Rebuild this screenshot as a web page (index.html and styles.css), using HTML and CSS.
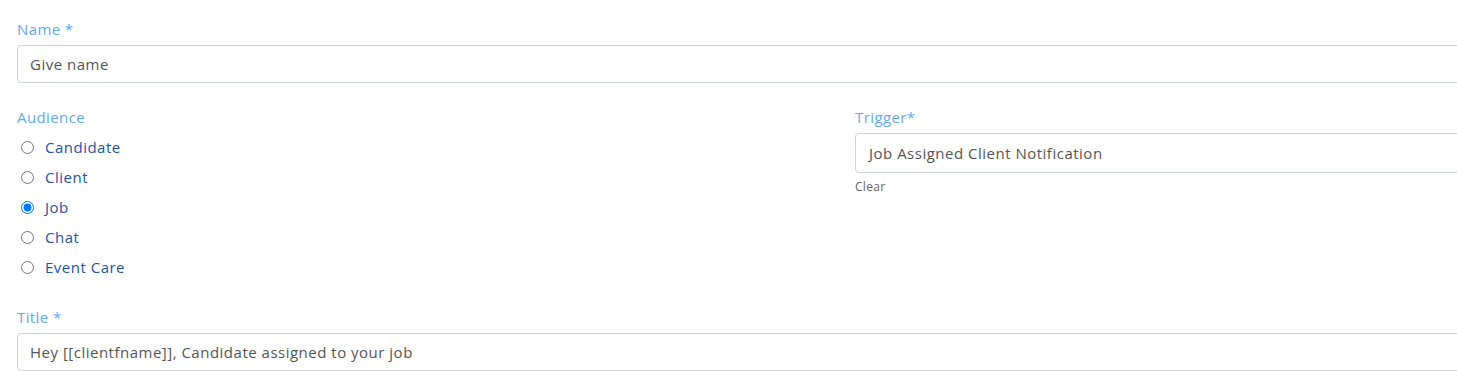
FILE: index.html
```html
<!DOCTYPE html>
<html lang="en">
<head>
    <meta charset="UTF-8">
    <meta name="viewport" content="width=device-width, initial-scale=1.0">
    <title>Notification Template</title>
    <link rel="stylesheet" href="styles.css">
</head>
<body>
    <form class="template-form">
        <div class="form-group">
            <label class="field-label" for="name">Name *</label>
            <input type="text" id="name" class="form-control" value="Give name">
        </div>

        <div class="form-row">
            <div class="form-col">
                <span class="field-label">Audience</span>
                <div class="radio-list">
                    <label class="radio-item"><input type="radio" name="audience"> <span>Candidate</span></label>
                    <label class="radio-item"><input type="radio" name="audience"> <span>Client</span></label>
                    <label class="radio-item"><input type="radio" name="audience" checked> <span>Job</span></label>
                    <label class="radio-item"><input type="radio" name="audience"> <span>Chat</span></label>
                    <label class="radio-item"><input type="radio" name="audience"> <span>Event Care</span></label>
                </div>
            </div>
            <div class="form-col">
                <label class="field-label" for="trigger">Trigger*</label>
                <div class="form-control select-control" id="trigger">Job Assigned Client Notification</div>
                <a href="#" class="clear-link">Clear</a>
            </div>
        </div>

        <div class="form-group">
            <label class="field-label" for="title">Title *</label>
            <input type="text" id="title" class="form-control" value="Hey [[clientfname]], Candidate assigned to your job">
        </div>
    </form>
</body>
</html>
```

FILE: styles.css
```css
body {
    margin: 0;
    padding: 0;
    background: #fff;
    font-family: "Open Sans", Arial, sans-serif;
    overflow: hidden;
}

.template-form {
    width: 1646px;
    padding: 18px 0 0 17px;
}

.field-label {
    display: block;
    color: #62a9f4;
    font-size: 15px;
    letter-spacing: 0.4px;
    line-height: 22px;
    margin-bottom: 5px;
}

.form-control {
    display: block;
    box-sizing: border-box;
    width: 100%;
    height: 38px;
    padding: 0 12px;
    border: 1px solid #ced4da;
    border-radius: 4px;
    font-family: inherit;
    font-size: 15px;
    letter-spacing: 0.5px;
    color: #555;
    background: #fff;
}

.form-row {
    display: flex;
    gap: 30px;
    margin-top: 23px;
}

.form-col {
    flex: 1;
}

.radio-list {
    margin-top: -1px;
}

.radio-item {
    display: flex;
    align-items: center;
    height: 30px;
    font-size: 15px;
    letter-spacing: 0.5px;
    color: #2553a3;
}

.radio-item input {
    margin: 0 11px 0 4px;
    width: 13px;
    height: 13px;
}

.select-control {
    height: 40px;
    line-height: 38px;
    padding: 0 13px;
}

.clear-link {
    display: block;
    margin-top: 5px;
    font-size: 12px;
    letter-spacing: 0.3px;
    color: #666;
    text-decoration: none;
}

.form-group + .form-row + .form-group {
    margin-top: 24px;
}
```
